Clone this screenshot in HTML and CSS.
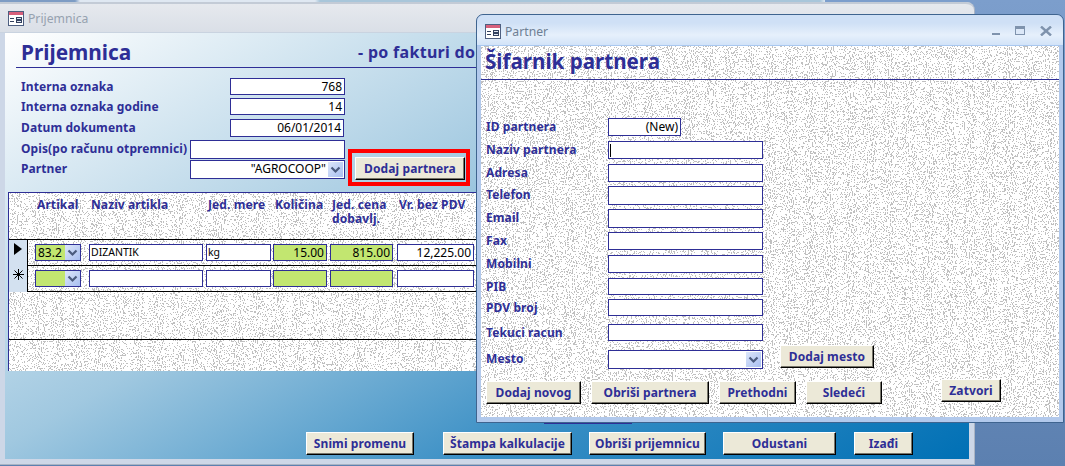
FILE: index.html
```html
<!DOCTYPE html>
<html lang="sr">
<head>
<meta charset="utf-8">
<title>Prijemnica</title>
<link rel="stylesheet" href="styles.css">
</head>
<body>
<svg class="defs" width="0" height="0" aria-hidden="true">
  <symbol id="form-icon" viewBox="0 0 16 15">
    <rect x="0.5" y="0.5" width="15" height="14" fill="#fff" stroke="#4e5f80"/>
    <rect x="1" y="1" width="14" height="3" fill="#d8607c"/>
    <rect x="2" y="7" width="4" height="1" fill="#33415f"/>
    <rect x="2" y="10" width="4" height="1" fill="#33415f"/>
    <rect x="8.5" y="6.5" width="5" height="2" fill="#dfe6f2" stroke="#33415f"/>
    <rect x="8.5" y="9.5" width="5" height="2" fill="#dfe6f2" stroke="#33415f"/>
  </symbol>
  <symbol id="chev" viewBox="0 0 15 15">
    <path d="M3.5 5.5 7.5 9.5 11.5 5.5" fill="none" stroke="#4b5b7e" stroke-width="2.2"/>
  </symbol>
</svg>

<div class="strip-top"></div>

<section class="window main-window">
  <header class="titlebar main-title">
    <svg class="ficon"><use href="#form-icon"/></svg>
    <span>Prijemnica</span>
  </header>
  <div class="form">
    <div class="form-head">
      <div class="head-line">
        <h1>Prijemnica</h1>
        <h2>- po fakturi do</h2>
      </div>
      <div class="frow r1"><label class="w-a">Interna oznaka</label><div class="box num f1">768</div></div>
      <div class="frow r2"><label class="w-a">Interna oznaka godine</label><div class="box num f2">14</div></div>
      <div class="frow r3"><label class="w-a">Datum dokumenta</label><div class="box num f3">06/01/2014</div></div>
      <div class="frow r4"><label class="w-b">Opis(po računu otpremnici)</label><div class="box f4"></div></div>
      <div class="frow r5">
        <label class="w-b">Partner</label>
        <div class="box num combo f4">"AGROCOOP"<svg class="arrow"><use href="#chev"/></svg></div>
        <div class="redbox"><button class="btn b-dp">Dodaj partnera</button></div>
      </div>
    </div>

    <div class="subform">
      <div class="col-heads">
        <span class="ch c1">Artikal</span>
        <span class="ch c2">Naziv artikla</span>
        <span class="ch c3">Jed. mere</span>
        <span class="ch c4">Količina</span>
        <span class="ch c5">Jed. cena dobavlj.</span>
        <span class="ch c6">Vr. bez PDV</span>
      </div>
      <div class="drow">
        <div class="selector"><svg width="8" height="12" viewBox="0 0 8 12"><path d="M0 0 8 6 0 12z" fill="#000"/></svg></div>
        <div class="box cell cw1 green combo-s">83.2<svg class="arrow"><use href="#chev"/></svg></div>
        <div class="box cell cw2 narrow">DIZANTIK</div>
        <div class="box cell cw3 narrow">kg</div>
        <div class="box cell cw4 green num">15.00</div>
        <div class="box cell cw5 green num">815.00</div>
        <div class="box cell cw6 num">12,225.00</div>
      </div>
      <div class="drow">
        <div class="selector"><svg width="11" height="11" viewBox="0 0 11 11"><path d="M5.5 0V11M0 5.5H11M1.5 1.5 9.5 9.5M9.5 1.5 1.5 9.5" stroke="#000" stroke-width="1" fill="none"/></svg></div>
        <div class="box cell cw1 green combo-s"><svg class="arrow"><use href="#chev"/></svg></div>
        <div class="box cell cw2"></div>
        <div class="box cell cw3"></div>
        <div class="box cell cw4 green"></div>
        <div class="box cell cw5 green"></div>
        <div class="box cell cw6"></div>
      </div>
      <div class="empty-row"></div>
    </div>

    <div class="form-foot">
      <span class="peek"></span>
      <button class="btn f-snimi">Snimi promenu</button>
      <button class="btn f-stampa">Štampa kalkulacije</button>
      <button class="btn f-obrisi">Obriši prijemnicu</button>
      <button class="btn f-odustani">Odustani</button>
      <button class="btn f-izadji">Izađi</button>
    </div>
  </div>
</section>

<section class="window partner-window">
  <header class="titlebar partner-title">
    <svg class="ficon"><use href="#form-icon"/></svg>
    <span class="ptext">Partner</span>
    <div class="winbtns">
      <svg width="10" height="10" viewBox="0 0 10 10"><rect x="1" y="7" width="8" height="2" fill="#7f93ad"/></svg>
      <svg width="11" height="10" viewBox="0 0 11 10"><rect x="0.5" y="0.5" width="9" height="8" fill="#dce8f8" stroke="#7f93ad"/><rect x="0" y="0" width="10" height="3" fill="#7f93ad"/></svg>
      <svg width="12" height="10" viewBox="0 0 12 10"><path d="M1 0.5 11 9.5M11 0.5 1 9.5" stroke="#7f93ad" stroke-width="2.4"/></svg>
    </div>
  </header>
  <div class="pform">
    <h1 class="ptitle">Šifarnik partnera</h1>
    <div class="pfields">
      <div class="prow"><label>ID partnera</label><div class="box num pid h18">(New)</div></div>
      <div class="prow"><label>Naziv partnera</label><div class="box pw h18"><i class="caret"></i></div></div>
      <div class="prow"><label>Adresa</label><div class="box pw h18"></div></div>
      <div class="prow"><label>Telefon</label><div class="box pw h19"></div></div>
      <div class="prow"><label>Email</label><div class="box pw h19"></div></div>
      <div class="prow"><label>Fax</label><div class="box pw h18"></div></div>
      <div class="prow"><label>Mobilni</label><div class="box pw h18"></div></div>
      <div class="prow"><label>PIB</label><div class="box pw h17"></div></div>
      <div class="prow"><label>PDV broj</label><div class="box pw h17"></div></div>
      <div class="prow"><label>Tekuci racun</label><div class="box pw h17"></div></div>
      <div class="prow"><label>Mesto</label><div class="box pw h19 combo"><svg class="arrow"><use href="#chev"/></svg></div><button class="btn p-mesto">Dodaj mesto</button></div>
    </div>
    <div class="pbtns">
      <button class="btn p-novog">Dodaj novog</button>
      <button class="btn p-obrisi">Obriši partnera</button>
      <button class="btn p-preth">Prethodni</button>
      <button class="btn p-sled">Sledeći</button>
      <button class="btn p-zat">Zatvori</button>
    </div>
  </div>
</section>
</body>
</html>
```
FILE: styles.css
```css
* { box-sizing: border-box; }
html, body { margin: 0; height: 100%; }
body {
  position: relative;
  width: 1065px;
  height: 466px;
  overflow: hidden;
  font-family: "Noto Sans", "Open Sans", sans-serif;
  font-size: 12px;
  color: #2e2e96;
  background: linear-gradient(180deg, #7c9ecc 0%, #5c80b0 100%);
}
.defs { position: absolute; }
.strip-top { height: 2px; background: linear-gradient(90deg, #7d9cc4 0 75px, #dfe8f2 80px 315px, #a8c6da 320px 820px, #dfe8f2 825px 825px, #7c9ecc 825px); }

.window { position: absolute; display: flex; flex-direction: column; }
.main-window {
  left: 0; top: 2px; width: 975px; height: 463px;
  background: #cdd7e7;
  border-radius: 0 8px 0 0;
  border-right: 1px solid #aab4c4;
  border-bottom: 1px solid #aab4c4;
  padding: 0 5px 5px 5px;
}
.titlebar { display: flex; align-items: center; flex: none; font-size: 12.2px; }
.main-title {
  height: 31px;
  margin: 0 -5px;
  padding-left: 8px;
  color: #96a1af;
  border-radius: 0 8px 0 0;
  border-top: 2px solid #c3cbd6;
  background: linear-gradient(180deg, #e6e9ee, #dadfe7);
  border-bottom: 1px solid #c9d3e0;
}
.ficon { width: 16px; height: 15px; margin-right: 4px; flex: none; }

.form {
  flex: 1;
  display: flex;
  flex-direction: column;
  background: linear-gradient(150deg, #fff 0%, #a0c8e0 42%, #3a8fc5 71%, #0070b5 100%);
}
.form-head { height: 159px; flex: none; }
.head-line {
  height: 35px;
  margin: 0 0 0 11px;
  padding-left: 5px;
  border-bottom: 1px solid #2e2e96;
  display: flex;
  align-items: flex-start;
}
h1, h2 { margin: 0; font-weight: 700; }
.head-line h1 { font-size: 20.8px; line-height: 28px; margin-top: 5px; width: 337px; }
.head-line h2 { font-size: 16px; line-height: 22px; margin-top: 8px; letter-spacing: .3px; white-space: nowrap; }

.frow { display: flex; margin-left: 16px; align-items: flex-start; }
label { font-weight: 700; white-space: nowrap; font-size: 12px; letter-spacing: .1px; line-height: 16px; padding-top: 1px; }
.w-a { width: 209px; }
.w-b { width: 169px; }
.r1 { margin-top: 10px; height: 20px; }
.r2 { height: 21px; }
.r3 { height: 21px; }
.r4 { height: 20px; }
.r5 { height: 22px; }

.box {
  border: 1px solid #2e2e96;
  background: #fff;
  color: #000;
  font-size: 12px;
  line-height: 15px;
  padding: 0 2px;
  white-space: nowrap;
  overflow: hidden;
  position: relative;
}
.num { text-align: right; }
.f1 { width: 115px; height: 17px; }
.f2 { width: 115px; height: 17px; }
.f3 { width: 114px; height: 18px; }
.f4 { width: 155px; height: 19px; }
.combo { padding-right: 18px; }
.arrow { position: absolute; right: 1px; top: 1px; width: 15px; height: 15px; background: linear-gradient(135deg, #dce6fa, #a9bff0); }

.redbox {
  margin-left: 3px;
  margin-top: -11px;
  width: 122px;
  height: 37px;
  border: 4px solid #f00;
  padding: 4px 0 0 3px;
}
.btn {
  display: block;
  height: 23px;
  padding: 0;
  font: 700 12px/1 "Noto Sans", "Open Sans", sans-serif;
  letter-spacing: .1px;
  color: #2e2e96;
  background: #ece9d8;
  border: 0;
  border-top: 1px solid #fff;
  border-left: 1px solid #fff;
  border-right: 1px solid #000;
  border-bottom: 1px solid #000;
  box-shadow: inset -1px -1px 0 #77756a;
  white-space: nowrap;
}
.b-dp { width: 110px; }

.subform {
  flex: none;
  height: 179px;
  width: 480px;
  margin-left: 3px;
  border-left: 1px solid #2e2e96;
  border-top: 1px solid #2e2e96;
  background-color: #fff;
  background-image: url("data:image/svg+xml,%3Csvg xmlns='http://www.w3.org/2000/svg' width='700' height='500'%3E%3Cfilter id='n' x='0' y='0' width='100%25' height='100%25' color-interpolation-filters='sRGB'%3E%3CfeTurbulence type='fractalNoise' baseFrequency='.95 .6' numOctaves='2' seed='7'/%3E%3CfeColorMatrix values='0 0 0 0 0 0 0 0 0 0 0 0 0 0 0 1 1 0 0 -.5'/%3E%3CfeComponentTransfer result='m'%3E%3CfeFuncA type='discrete' tableValues='0 0 0 0 0 1 1 1'/%3E%3C/feComponentTransfer%3E%3CfeFlood flood-color='%23c0c0c0'/%3E%3CfeComposite operator='in' in2='m'/%3E%3C/filter%3E%3Crect width='700' height='500' filter='url(%23n)'/%3E%3C/svg%3E");
}
.col-heads { height: 46px; display: flex; align-items: flex-start; padding-top: 5px; }
.ch { font-weight: 700; font-size: 12px; line-height: 14px; letter-spacing: .1px; display: block; white-space: nowrap; }
.c1 { margin-left: 28px; width: 54px; }
.c2 { width: 117px; }
.c3 { width: 67px; }
.c4 { width: 57px; }
.c5 { width: 67px; white-space: normal; }
.c6 { white-space: nowrap; }

.drow {
  height: 26px;
  border-top: 1px solid #000;
  display: flex;
  align-items: flex-start;
  padding-top: 4px;
}
.selector {
  width: 19px;
  height: 26px;
  margin-top: -4px;
  margin-right: 7px;
  background: #d3e1f0;
  border-right: 1px solid #000;
  flex: none;
  padding-top: 3px;
  display: flex;
  justify-content: center;
}
.cell { height: 17px; margin-right: 3px; flex: none; }
.cw1 { width: 46px; margin-right: 8px; }
.cw2 { width: 114px; }
.cw3 { width: 65px; margin-right: 2px; }
.cw4 { width: 54px; }
.cw5 { width: 63px; margin-right: 4px; }
.cw6 { width: 77px; margin-right: 0; }
.narrow { font-size: 10.5px; padding-left: 1px; }
.green { background: #c2e670; }
.combo-s .arrow { top: 0; right: 0; width: 15px; }
.empty-row { height: 49px; border-top: 1px solid #000; border-bottom: 1px solid #000; }

.form-foot {
  position: relative;
  flex: 1;
  display: flex;
  align-items: flex-start;
  padding: 61px 0 0 301px;
}
.peek { position: absolute; left: 539px; top: 50px; width: 88px; height: 3px; border-bottom: 1px solid #2e2e96; background: #fff; }
.f-snimi { width: 108px; }
.f-stampa { width: 129px; margin-left: 29px; }
.f-obrisi { width: 117px; margin-left: 17px; }
.f-odustani { width: 113px; margin-left: 17px; }
.f-izadji { width: 59px; margin-left: 18px; }

.partner-window {
  left: 476px; top: 14px; width: 588px; height: 409px;
  background: #b2c9ec;
  border: 1px solid #3f648f;
  border-radius: 7px 7px 0 0;
  padding: 0 4px 5px 4px;
}
.partner-title {
  height: 31px;
  margin: 0 -4px;
  padding: 2px 0 0 8px;
  color: #6e7f94;
  border-radius: 7px 7px 0 0;
  background: linear-gradient(180deg, #cfe0f6 0, #cfe0f6 8px, #e6f0fc 20px, #d2e3f8 30px);
  border-bottom: 1px solid #a9c8f0;
}
.ptext { flex: 1; }
.winbtns { display: flex; gap: 14px; align-items: center; padding-right: 11px; }
.pform {
  flex: 1;
  background-color: #fff;
  background-image: url("data:image/svg+xml,%3Csvg xmlns='http://www.w3.org/2000/svg' width='700' height='500'%3E%3Cfilter id='n' x='0' y='0' width='100%25' height='100%25' color-interpolation-filters='sRGB'%3E%3CfeTurbulence type='fractalNoise' baseFrequency='.95 .6' numOctaves='2' seed='11'/%3E%3CfeColorMatrix values='0 0 0 0 0 0 0 0 0 0 0 0 0 0 0 1 1 0 0 -.5'/%3E%3CfeComponentTransfer result='m'%3E%3CfeFuncA type='discrete' tableValues='0 0 0 0 0 1 1 1'/%3E%3C/feComponentTransfer%3E%3CfeFlood flood-color='%23c0c0c0'/%3E%3CfeComposite operator='in' in2='m'/%3E%3C/filter%3E%3Crect width='700' height='500' filter='url(%23n)'/%3E%3C/svg%3E");
}
.ptitle {
  height: 34px;
  font-size: 20.6px;
  line-height: 30px;
  padding-left: 4px;
  border-bottom: 1px solid #2e2e96;
}
.pfields {
  display: grid;
  margin: 38px 0 0 5px;
  grid-template-rows: 23px 23px 22px 23px 23px 23px 23px 21px 25px 26px 31px;
}
.prow { display: flex; align-items: flex-start; }
.prow label { width: 122px; line-height: 17px; padding-top: 0; }
.pid { width: 73px; }
.pw { width: 155px; }
.h17 { height: 17px; }
.h18 { height: 18px; }
.h19 { height: 19px; }
.caret { position: absolute; left: 1px; top: 2px; width: 1px; height: 13px; background: #000; }
.p-mesto { width: 94px; margin: -5px 0 0 17px; height: 23px; }
.pbtns { display: flex; align-items: flex-start; padding-left: 5px; }
.p-novog { width: 95px; }
.p-obrisi { width: 118px; margin-left: 10px; }
.p-preth { width: 77px; margin-left: 10px; }
.p-sled { width: 76px; margin-left: 10px; }
.p-zat { width: 60px; margin: -2px 0 0 59px; }
```
